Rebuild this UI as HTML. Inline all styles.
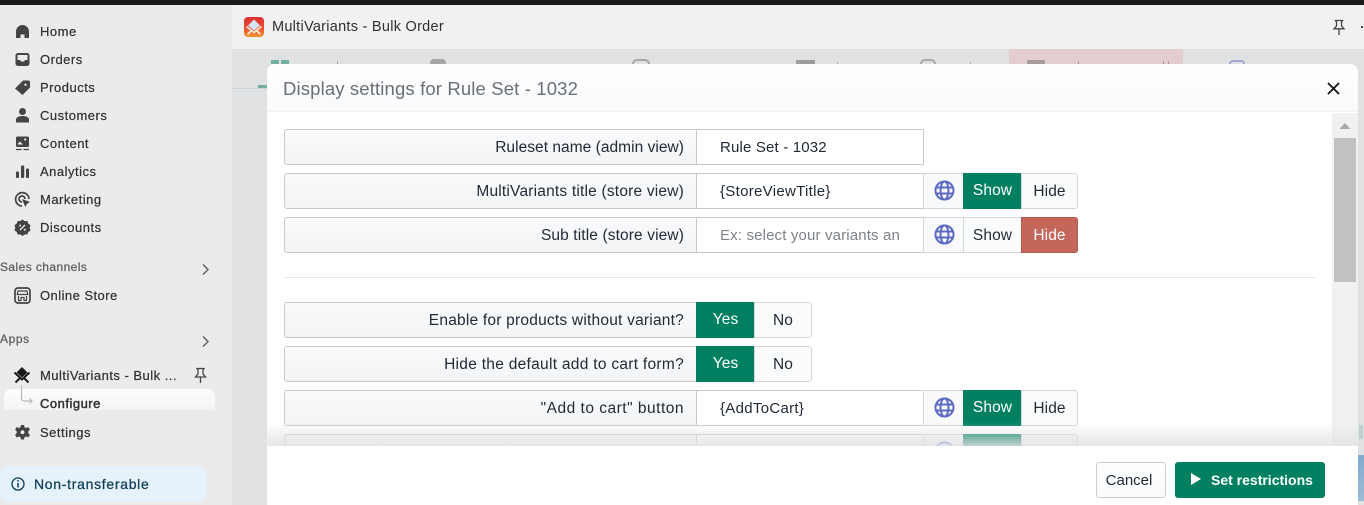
<!DOCTYPE html>
<html><head><meta charset="utf-8"><style>
*{box-sizing:border-box}
html,body{margin:0;padding:0;width:1364px;height:505px;overflow:hidden;background:#dfe1e3;font-family:"Liberation Sans",sans-serif}
.a{position:absolute}
.t{position:absolute;white-space:nowrap}
.nav{left:40px;margin-top:1px;font-size:13px;line-height:16px;color:#303030;letter-spacing:.5px;font-weight:400;-webkit-text-stroke:.2px #303030}
.sec{left:0;font-size:12px;line-height:16px;color:#616161;letter-spacing:.42px;-webkit-text-stroke:.3px #616161}
.ic{position:absolute;left:14px;width:17px;height:17px}
.lb{position:absolute;left:284px;width:413px;height:36px;border:1px solid #c5c9ce;border-radius:3px 0 0 3px;background:linear-gradient(#f9fafb,#f3f4f6);font-size:15.5px;line-height:36px;text-align:right;padding-right:12px;color:#212b36;white-space:nowrap}
.in{position:absolute;left:696px;width:228px;height:36px;border:1px solid #c5c9ce;background:#fff;font-size:15px;line-height:36px;padding-left:23px;color:#212b36;white-space:nowrap}
.gl{position:absolute;left:923px;width:41px;height:36px;border:1px solid #d3d6da;background:#f9fafb}
.gl svg{position:absolute;left:10px;top:6px}
.b{position:absolute;height:36px;font-size:15.5px;line-height:36px;letter-spacing:.1px;text-align:center;color:#212b36;background:#fafbfb;border:1px solid #d3d6da}
.g{background:#008060;border-color:#008060;color:#fff;line-height:34px}
.r{background:#c4675a;border-color:#b55c50;color:#fff;border-radius:0 3px 3px 0}
.e{border-radius:0 3px 3px 0}
</style></head><body>
<div class="a" style="left:0;top:0;width:1364px;height:5px;background:#1a1a1a"></div>
<div class="a" style="left:0;top:5px;width:232px;height:500px;background:#ebebeb"></div>
<div class="a" style="left:232px;top:5px;width:1132px;height:44px;background:#f1f1f1"></div>

<svg class="ic" style="top:23px" viewBox="0 0 17 17"><path d="M2 8.500C2 5 5 2 8.500 2S15 5 15 8.500V15H10.500V11.500H6.500V15H2Z" fill="#444"/></svg>
<div class="t nav" style="top:23px">Home</div>
<svg class="ic" style="top:51px" viewBox="0 0 17 17"><path fill-rule="evenodd" d="M4 2H13A2.500 2.500 0 0 1 15.500 4.500V12.500A2.500 2.500 0 0 1 13 15H4A2.500 2.500 0 0 1 1.500 12.500V4.500A2.500 2.500 0 0 1 4 2ZM3.500 4V9H6L7 10.500H10L11 9H13.500V4Z" fill="#444"/></svg>
<div class="t nav" style="top:51px">Orders</div>
<svg class="ic" style="top:79px" viewBox="0 0 17 17"><path fill-rule="evenodd" d="M9 1.500H14.500A1.500 1.500 0 0 1 16 3V8.500L8.500 16 1 9.500Z M11.500 4.500a1.200 1.200 0 1 0 .01 0Z" fill="#444"/></svg>
<div class="t nav" style="top:79px">Products</div>
<svg class="ic" style="top:107px" viewBox="0 0 17 17"><circle cx="8.500" cy="4.500" r="3.500" fill="#444"/><path d="M2 15.500V12.500C2 10.300 5 9 8.500 9S15 10.300 15 12.500V15.500Z" fill="#444"/></svg>
<div class="t nav" style="top:107px">Customers</div>
<svg class="ic" style="top:135px" viewBox="0 0 17 17"><rect x="2" y="1.500" width="13" height="10.500" rx="1.500" fill="#444"/><circle cx="11.200" cy="4.500" r="1.100" fill="#ebebeb"/><path d="M3.500 9L6 6.500 9 9.500H3.500Z" fill="#ebebeb"/><path d="M2 14.500H7.500M9.500 14.500H15" stroke="#444" stroke-width="1.200"/></svg>
<div class="t nav" style="top:135px">Content</div>
<svg class="ic" style="top:163px" viewBox="0 0 17 17"><rect x="2" y="8.500" width="3" height="6.500" rx="1" fill="#444"/><rect x="7" y="2.500" width="3.200" height="12.500" rx="1" fill="#444"/><rect x="12" y="5.500" width="3" height="9.500" rx="1" fill="#444"/></svg>
<div class="t nav" style="top:163px">Analytics</div>
<svg class="ic" style="top:191px" viewBox="0 0 17 17"><path d="M8 15A6.700 6.700 0 1 1 15 8" fill="none" stroke="#444" stroke-width="1.700"/><path d="M8 11A3 3 0 1 1 11 8" fill="none" stroke="#444" stroke-width="1.700"/><path d="M8 8L16 11 13 12.800 11.300 16Z" fill="#444"/></svg>
<div class="t nav" style="top:191px">Marketing</div>
<svg class="ic" style="top:219px" viewBox="0 0 17 17"><path d="M8.500 .5L10.500 2 13.300 2 14.200 4.500 16.500 6.300 15.700 9 16.500 11.500 14.200 13 13.300 15.500 10.500 15.500 8.500 17 6.500 15.500 3.700 15.500 2.800 13 .5 11.500 1.300 9 .5 6.300 2.800 4.500 3.700 2 6.500 2Z" fill="#444"/><path d="M6 11L11 6" stroke="#ebebeb" stroke-width="1.300"/><circle cx="6.200" cy="6.500" r="1" fill="#ebebeb"/><circle cx="10.800" cy="10.700" r="1" fill="#ebebeb"/></svg>
<div class="t nav" style="top:219px">Discounts</div>

<div class="t sec" style="top:259px">Sales channels</div>
<svg class="a" style="left:200px;top:263px" width="11" height="13" viewBox="0 0 11 13"><path d="M3 1.500L8 6.500 3 11.500" fill="none" stroke="#5c5c5c" stroke-width="1.400"/></svg>
<svg class="ic" style="top:287px" viewBox="0 0 17 17"><rect x="1" y="1" width="15" height="15" rx="3" fill="none" stroke="#444" stroke-width="1.700"/><path d="M4 4H13L13.800 7.500H3.200Z" fill="none" stroke="#444" stroke-width="1.200"/><path d="M4.500 9V13.500H7V10.500H10V13.500H12.500V9" fill="none" stroke="#444" stroke-width="1.200"/></svg>
<div class="t nav" style="top:287px;letter-spacing:.45px">Online Store</div>
<div class="t sec" style="top:331px;letter-spacing:.6px">Apps</div>
<svg class="a" style="left:200px;top:335px" width="11" height="13" viewBox="0 0 11 13"><path d="M3 1.500L8 6.500 3 11.500" fill="none" stroke="#5c5c5c" stroke-width="1.400"/></svg>

<div class="a" style="left:4px;top:389px;width:211px;height:21px;background:linear-gradient(#fdfdfd,#f4f4f4);border-radius:8px 8px 0 0"></div>
<svg class="a" style="left:13px;top:366px" width="18" height="18" viewBox="0 0 18 18"><path d="M9 1L14.500 6.500 9 11.500 3.500 6.500Z" fill="#1a1a1a"/><path d="M1.500 6.500L9 13.500 16.500 6.500 M2.500 16.500L7 12M15.500 16.500L11 12" fill="none" stroke="#1a1a1a" stroke-width="2"/></svg>
<svg class="a" style="left:18px;top:384px" width="18" height="22" viewBox="0 0 18 22"><path d="M3.500 1V14Q3.500 17 6.500 17H14M11.500 14.500L14 17 11.500 19.500" fill="none" stroke="#b8b8b8" stroke-width="1.200"/></svg>
<div class="t nav" style="top:367px;letter-spacing:.48px">MultiVariants - Bulk ...</div>
<svg class="a" style="left:193px;top:367px" width="15" height="17" viewBox="0 0 15 17"><path d="M4 1.500H11L10 3V7L12.500 10H2.500L5 7V3ZM7.500 10V16" fill="none" stroke="#444" stroke-width="1.300"/></svg>
<div class="t nav" style="top:395px;-webkit-text-stroke:.45px #303030">Configure</div>
<svg class="ic" style="top:424px" viewBox="0 0 17 17"><path fill-rule="evenodd" d="M7 1H10L10.500 3.200 12.300 4 14.300 3 15.900 5.600 14.300 7.200V9.300L15.900 10.900 14.300 13.500 12.300 12.500 10.500 13.300 10 15.500H7L6.500 13.300 4.700 12.500 2.700 13.500 1.100 10.900 2.700 9.300V7.200L1.100 5.600 2.700 3 4.700 4 6.500 3.200Z M8.500 6.300a2 2 0 1 0 .01 0Z" fill="#444"/></svg>
<div class="t nav" style="top:424px">Settings</div>
<div class="a" style="left:0;top:466px;width:207px;height:36px;background:#e5f1fb;border-radius:8px"></div>
<svg class="a" style="left:11px;top:477px" width="14" height="14" viewBox="0 0 14 14"><circle cx="7" cy="7" r="6" fill="none" stroke="#0d3c56" stroke-width="1.300"/><path d="M7 6V10.500" stroke="#0d3c56" stroke-width="1.500"/><circle cx="7" cy="3.900" r=".9" fill="#0d3c56"/></svg>
<div class="t" style="left:34px;top:476px;font-size:14px;line-height:16px;color:#0d3c56;letter-spacing:.7px;-webkit-text-stroke:.25px #0d3c56">Non-transferable</div>

<svg class="a" style="left:244px;top:17px" width="20" height="20" viewBox="0 0 20 20"><defs><linearGradient id="lg" x1="0" y1="0" x2="0" y2="1"><stop offset="0" stop-color="#dc2f35"/><stop offset=".55" stop-color="#e8502e"/><stop offset="1" stop-color="#f2942e"/></linearGradient></defs><rect width="20" height="20" rx="4" fill="url(#lg)"/><path d="M10 2.500L16 8.500 10 13.500 4 8.500Z" fill="#d5e4f2"/><path d="M2.500 9.500L10 15.500 17.500 9.500M3.500 17.500L7.500 13.500M16.500 17.500L12.500 13.500" fill="none" stroke="#fce8da" stroke-width="1.700"/></svg>
<div class="t" style="left:272px;top:19px;font-size:14.5px;line-height:17px;letter-spacing:.27px;color:#303030">MultiVariants - Bulk Order</div>
<svg class="a" style="left:1332px;top:19px" width="14" height="17" viewBox="0 0 14 17"><path d="M3.500 1.500H10.500L9.500 3V7L12 9.800H2L4.500 7V3ZM7 10V16" fill="none" stroke="#444" stroke-width="1.300"/></svg>
<div class="a" style="left:1361px;top:26px;width:2px;height:2px;background:#444"></div>

<div class="a" style="left:232px;top:49px;width:1132px;height:456px;background:#dfe1e3"></div>
<div class="a" style="left:232px;top:88px;width:40px;height:1px;background:#cfd2d4"></div>
<div class="a" style="left:258px;top:85px;width:10px;height:3px;background:#75ad9e"></div>
<div class="a" style="left:271px;top:60px;width:8px;height:4px;background:#75ad9e"></div>
<div class="a" style="left:281px;top:60px;width:8px;height:4px;background:#75ad9e"></div>
<div class="a" style="left:337px;top:61px;width:1px;height:3px;background:#a8aaac"></div>
<div class="a" style="left:430px;top:59px;width:16px;height:5px;background:#a4a6a8;border-radius:4px 4px 0 0"></div>
<div class="a" style="left:632px;top:59px;width:18px;height:5px;border:2px solid #a4a6a8;border-bottom:0;border-radius:9px 9px 0 0"></div>
<div class="a" style="left:796px;top:60px;width:19px;height:4px;background:#9a9c9e"></div>
<div class="a" style="left:837px;top:62px;width:1px;height:2px;background:#a8aaac"></div>
<div class="a" style="left:920px;top:59px;width:16px;height:5px;border:2px solid #a4a6a8;border-bottom:0;border-radius:8px 8px 0 0"></div>
<div class="a" style="left:970px;top:62px;width:1px;height:2px;background:#a8aaac"></div>
<div class="a" style="left:1009px;top:49px;width:174px;height:15px;background:#e3cdce"></div>
<div class="a" style="left:1027px;top:60px;width:18px;height:4px;background:#a89c9e"></div>
<div class="a" style="left:1078px;top:61px;width:1px;height:3px;background:#a89c9e"></div>
<div class="a" style="left:1163px;top:61px;width:1px;height:3px;background:#a89c9e"></div>
<div class="a" style="left:1168px;top:61px;width:1px;height:3px;background:#a89c9e"></div>
<div class="a" style="left:1229px;top:60px;width:16px;height:4px;border:2px solid #a3a9d0;border-bottom:0;border-radius:8px 8px 0 0"></div>

<div class="a" style="left:1358px;top:455px;width:6px;height:46px;background:linear-gradient(135deg,#7fa9cc,#9dbcd6)"></div>
<div class="a" style="left:1359px;top:425px;width:4px;height:14px;background:#bcd0cf"></div>

<!-- modal -->
<div class="a" style="left:267px;top:64px;width:1091px;height:441px;background:#fff;border-radius:8px 8px 0 0;overflow:hidden">
  <div class="a" style="left:0;top:0;width:1091px;height:48px;background:linear-gradient(#ffffff,#f7f9fb);border-bottom:1px solid #eef0f2"></div>
  <div class="t" style="left:16px;top:14px;font-size:18.5px;line-height:22px;letter-spacing:.14px;color:#6b6f73">Display settings for Rule Set - 1032</div>
  <svg class="a" style="left:1059px;top:17px" width="15" height="15" viewBox="0 0 15 15"><path d="M2 2L13 13M13 2L2 13" stroke="#111" stroke-width="1.800"/></svg>
  <div class="a" style="left:1065px;top:49px;width:26px;height:333px;background:#f1f1f1"></div>
  <div class="a" style="left:1067px;top:74px;width:22px;height:144px;background:#c1c1c1"></div>
  <svg class="a" style="left:1072px;top:58px" width="12" height="8" viewBox="0 0 12 8"><path d="M6 1L11.500 7H.5Z" fill="#a8a8a8"/></svg>
</div>

<div class="lb" style="top:129px;letter-spacing:.04px">Ruleset name (admin view)</div>
<div class="in" style="top:129px;letter-spacing:.17px">Rule Set - 1032</div>

<div class="lb" style="top:173px;letter-spacing:.2px">MultiVariants title (store view)</div>
<div class="in" style="top:173px;letter-spacing:.3px">{StoreViewTitle}</div>
<div class="gl" style="top:173px"><svg width="21" height="21" viewBox="0 0 21 21"><g fill="none" stroke="#5c6ac4" stroke-width="2"><circle cx="10.500" cy="10.500" r="9"/><ellipse cx="10.500" cy="10.500" rx="4" ry="9"/><path d="M2 7.500H19M2 13.500H19"/></g></svg></div>
<div class="b g" style="top:173px;left:963px;width:59px">Show</div>
<div class="b e" style="top:173px;left:1021px;width:57px">Hide</div>

<div class="lb" style="top:217px;letter-spacing:.12px">Sub title (store view)</div>
<div class="in" style="top:217px;color:#7d8287;letter-spacing:.15px">Ex: select your variants an</div>
<div class="gl" style="top:217px"><svg width="21" height="21" viewBox="0 0 21 21"><g fill="none" stroke="#5c6ac4" stroke-width="2"><circle cx="10.500" cy="10.500" r="9"/><ellipse cx="10.500" cy="10.500" rx="4" ry="9"/><path d="M2 7.500H19M2 13.500H19"/></g></svg></div>
<div class="b" style="top:217px;left:963px;width:59px">Show</div>
<div class="b r" style="top:217px;left:1021px;width:57px">Hide</div>

<div class="a" style="left:284px;top:277px;width:1032px;height:1px;background:#e4e6e8"></div>

<div class="lb" style="top:302px;letter-spacing:.22px">Enable for products without variant?</div>
<div class="b g" style="top:302px;left:696px;width:59px">Yes</div>
<div class="b e" style="top:302px;left:754px;width:58px">No</div>

<div class="lb" style="top:346px;letter-spacing:.29px">Hide the default add to cart form?</div>
<div class="b g" style="top:346px;left:696px;width:59px">Yes</div>
<div class="b e" style="top:346px;left:754px;width:58px">No</div>

<div class="lb" style="top:390px;letter-spacing:.5px">"Add to cart" button</div>
<div class="in" style="top:390px;letter-spacing:.3px">{AddToCart}</div>
<div class="gl" style="top:390px"><svg width="21" height="21" viewBox="0 0 21 21"><g fill="none" stroke="#5c6ac4" stroke-width="2"><circle cx="10.500" cy="10.500" r="9"/><ellipse cx="10.500" cy="10.500" rx="4" ry="9"/><path d="M2 7.500H19M2 13.500H19"/></g></svg></div>
<div class="b g" style="top:390px;left:963px;width:59px">Show</div>
<div class="b e" style="top:390px;left:1021px;width:57px">Hide</div>

<div class="lb" style="top:434px"></div>
<div class="in" style="top:434px"></div>
<div class="gl" style="top:434px"><svg width="21" height="21" viewBox="0 0 21 21"><g fill="none" stroke="#5c6ac4" stroke-width="2"><circle cx="10.500" cy="10.500" r="9"/></g></svg></div>
<div class="b g" style="top:434px;left:963px;width:59px"></div>
<div class="b e" style="top:434px;left:1021px;width:57px"></div>

<div class="a" style="left:267px;top:422px;width:1091px;height:24px;background:linear-gradient(rgba(225,226,228,0),rgba(225,226,228,.85))"></div>
<div class="a" style="left:267px;top:446px;width:1091px;height:59px;background:#fff"></div>
<div class="a" style="left:1096px;top:462px;width:70px;height:36px;background:linear-gradient(#fff,#f9fafb);border:1px solid #c9ccd0;border-radius:3px;font-size:15px;line-height:35px;padding-right:4px;text-align:center;color:#212b36">Cancel</div>
<div class="a" style="left:1175px;top:462px;width:150px;height:36px;background:#008060;border-radius:3px"></div>
<svg class="a" style="left:1190px;top:472px" width="12" height="14" viewBox="0 0 12 14"><path d="M1 1L11 7 1 13Z" fill="#fff"/></svg>
<div class="t" style="left:1211px;top:472px;font-size:14px;line-height:17px;color:#fff;font-weight:700">Set restrictions</div>
</body></html>
